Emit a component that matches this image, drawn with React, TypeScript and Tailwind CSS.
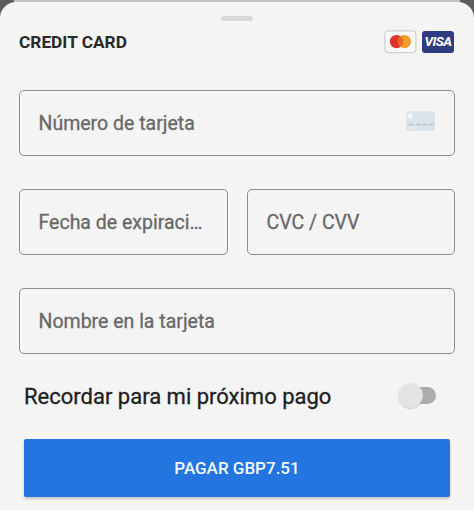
import type { ReactNode } from 'react';

function MastercardLogo() {
  return (
    <svg width="33" height="24" viewBox="0 0 33 24">
      <rect x="0.9" y="0.9" width="31" height="21.8" rx="3.5" fill="#f8f8f8" stroke="#c6c6c6" strokeWidth="1" />
      <circle cx="12.5" cy="11.6" r="6.7" fill="#e0352b" />
      <circle cx="20.4" cy="11.6" r="6.7" fill="#f29d2c" />
      <path d="M16.45 6.2a6.7 6.7 0 0 1 0 10.8a6.7 6.7 0 0 1 0-10.8z" fill="#ec6628" />
    </svg>
  );
}

function VisaLogo() {
  return (
    <div className="flex h-[22px] w-8 items-center justify-center rounded-[3px] bg-[#303c80]">
      <span className="text-[13.5px] leading-none font-bold tracking-[-0.5px] text-white italic">VISA</span>
    </div>
  );
}

function CardIcon() {
  return (
    <svg className="-mt-1.5" width="30" height="20" viewBox="0 0 30 20">
      <rect x="0.5" y="0.3" width="28.5" height="19.4" rx="2" fill="#dbe2e8" />
      <rect x="2" y="2.5" width="4.5" height="4.5" rx="1" fill="#f3f6f8" />
      <path d="M2.5 13.6h5M9.5 13.6h5M16 13.6h5M22.5 13.6h5" stroke="#b7c3cb" strokeWidth="1.4" />
      <path d="M2.5 17h9" stroke="#edf1f4" strokeWidth="1.2" />
    </svg>
  );
}

function Field({ label, className, children }: { label: string; className?: string; children?: ReactNode }) {
  return (
    <div
      className={`flex h-[66px] items-center justify-between rounded-[5px] border border-[#8c8c8c] pt-0.5 pr-[18px] pl-[18.5px] text-[19.5px] leading-6 whitespace-nowrap text-[#686868] ${className ?? ''}`}
    >
      <span className="[-webkit-text-stroke:0.3px]">{label}</span>
      {children}
    </div>
  );
}

export default function App() {
  return (
    <div className="h-[512px] w-[474px] overflow-hidden bg-white font-[Roboto,sans-serif]">
      <div className="h-[510px] bg-[linear-gradient(90deg,#5c5c5c_14px,#c4c4c4_14px,#c4c4c4_460px,#5c5c5c_460px)] pt-0.5">
        <div className="h-[508px] rounded-t-[16px] bg-[#f4f4f4] pt-[14px]">
          {/* Drag handle */}
          <div className="mx-auto h-[5px] w-8 rounded-full bg-[#d8d8d8]" />

          <div className="mt-[9px] flex h-6 items-center justify-between pr-5 pl-[19px]">
            <h1 className="text-[17.3px] leading-6 font-bold text-[#292929]">CREDIT CARD</h1>
            <div className="flex items-center gap-[5px]">
              <MastercardLogo />
              <VisaLogo />
            </div>
          </div>

          <div className="mt-9 flex flex-col gap-[33px] px-[19px]">
            <Field label="Número de tarjeta">
              <CardIcon />
            </Field>
            <div className="flex justify-between">
              <Field label="Fecha de expiraci…" className="w-[209px]" />
              <Field label="CVC / CVV" className="w-[208px]" />
            </div>
            <Field label="Nombre en la tarjeta" />
          </div>

          <div className="mt-[29px] flex h-7 items-center justify-between pr-[38px] pl-6">
            <span className="text-[22px] leading-7 whitespace-nowrap text-[#202020] [-webkit-text-stroke:0.3px]">
              Recordar para mi próximo pago
            </span>
            {/* Switch in the off position */}
            <div className="-mt-[3px] flex h-[17px] w-[33px] items-center rounded-full bg-[#acacac]">
              <div className="-ml-[5px] size-[25px] shrink-0 rounded-full bg-[#e4e4e4] shadow-[0_1px_1px_#00000026]" />
            </div>
          </div>

          <button className="mx-6 mt-[28px] block h-[58px] w-[426px] rounded-[2px] bg-[#2575e1] pt-0.5 text-[17px] font-medium text-[#f3f8ff] shadow-[0_2px_3px_#00000030]">
            PAGAR GBP7.51
          </button>
        </div>
      </div>
    </div>
  );
}
